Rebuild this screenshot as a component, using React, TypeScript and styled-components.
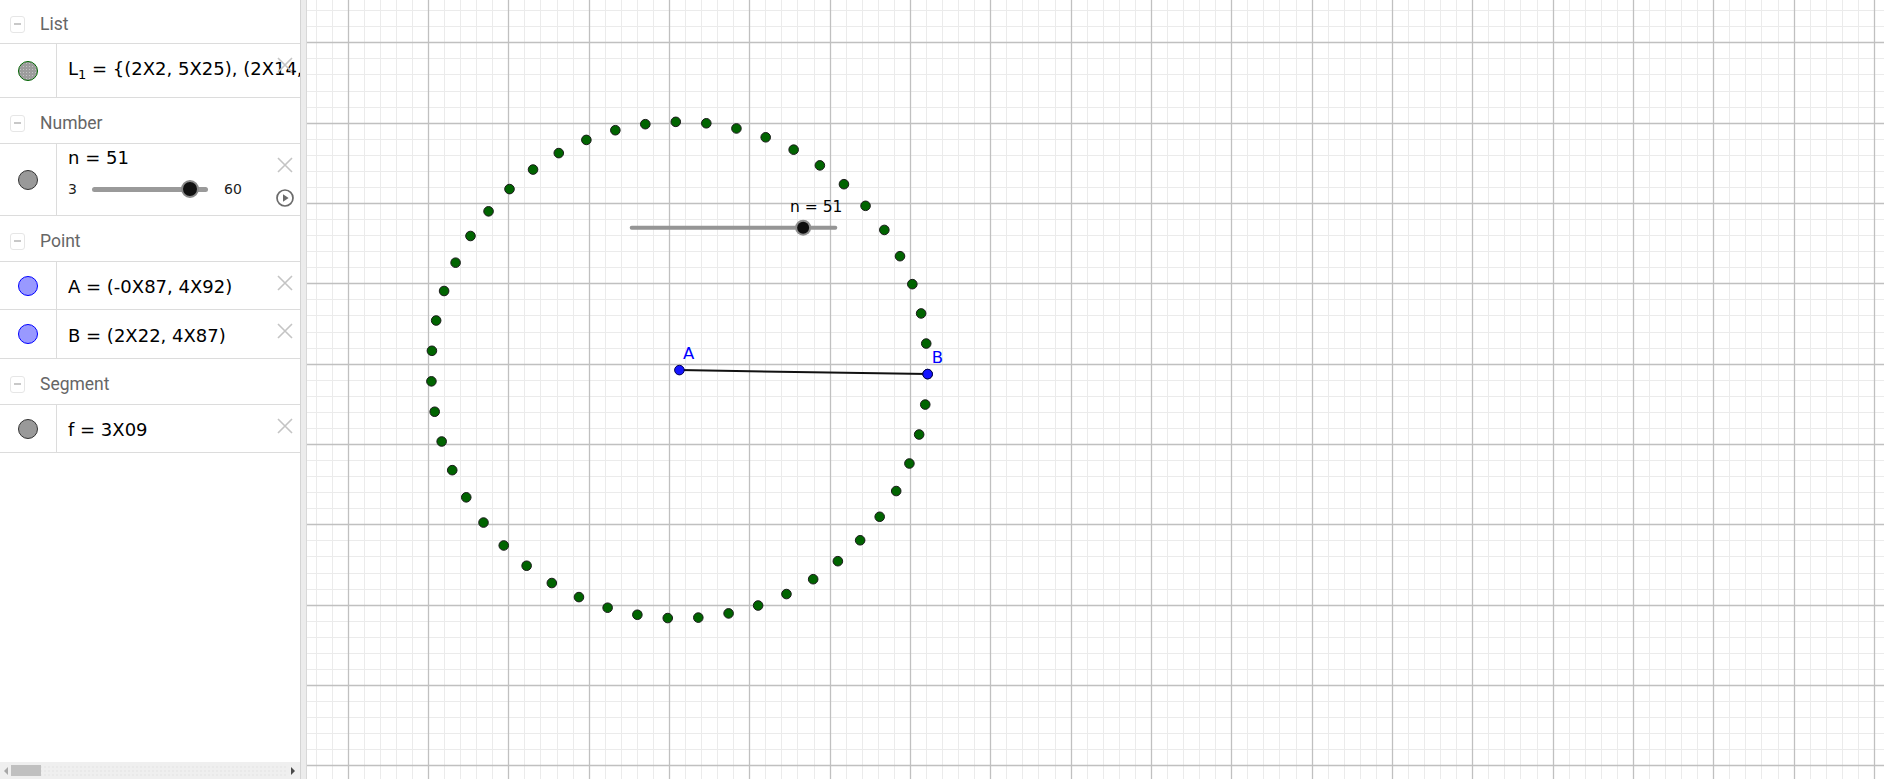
import React from "react";
import styled, { createGlobalStyle } from "styled-components";

const GlobalStyle = createGlobalStyle`
  html, body {
    margin: 0;
    padding: 0;
    background: #fff;
    overflow: hidden;
  }
  * {
    box-sizing: border-box;
  }
`;

const Layout = styled.div`
  display: flex;
  width: 1884px;
  height: 779px;
`;

const AlgebraPanel = styled.div`
  width: 301px;
  flex-shrink: 0;
  display: flex;
  flex-direction: column;
  border-right: 1px solid #d4d4d4;
  background: #fff;
`;

const ItemList = styled.div`
  flex: 1;
  overflow: hidden;
`;

const GroupHeader = styled.div<{ $h: number }>`
  height: ${({ $h }) => $h}px;
  display: flex;
  align-items: center;
  gap: 15px;
  padding: 5px 0 0 10px;
  border-bottom: 1px solid #dcdcdc;
  font-family: Roboto, "Noto Sans", sans-serif;
  font-size: 17.5px;
  color: #666;
`;

const CollapseBox = styled.span`
  width: 15px;
  height: 17px;
  border: 1px solid #e6e6e6;
  border-radius: 3px;
  display: flex;
  align-items: center;
  justify-content: center;

  &::before {
    content: "";
    width: 7px;
    height: 2px;
    background: #c8c8c8;
  }
`;

const ItemRow = styled.div<{ $h: number }>`
  position: relative;
  height: ${({ $h }) => $h}px;
  display: flex;
  border-bottom: 1px solid #dcdcdc;
`;

const MarkerCell = styled.div`
  width: 57px;
  flex-shrink: 0;
  border-right: 1px solid #dcdcdc;
  display: flex;
  align-items: center;
  justify-content: center;
`;

const Marker = styled.span<{ $fill: string; $stroke: string; $dotted?: boolean }>`
  width: 20px;
  height: 20px;
  border-radius: 50%;
  background-color: ${({ $fill }) => $fill};
  border: 1px solid ${({ $stroke }) => $stroke};
  ${({ $dotted }) =>
    $dotted &&
    `background-image: radial-gradient(circle, #c4c4c4 0.8px, transparent 1px);
     background-size: 3px 3px;`}
`;

const Content = styled.div<{ $column?: boolean }>`
  flex: 1;
  min-width: 0;
  padding-left: 11px;
  display: flex;
  flex-direction: ${({ $column }) => ($column ? "column" : "row")};
  justify-content: flex-start;
  align-items: ${({ $column }) => ($column ? "flex-start" : "center")};
  padding-top: ${({ $column }) => ($column ? "3px" : "0")};
  overflow: hidden;
  white-space: nowrap;
  font-family: "DejaVu Sans", "Liberation Sans", sans-serif;
  font-size: 18px;
  color: #000;
`;

const Formula = styled.span`
  line-height: 24px;
  padding-top: 3px;

  sub {
    font-size: 13px;
    vertical-align: -4px;
  }
`;

const NumberValue = styled.span`
  line-height: 22px;
`;

const SliderRow = styled.div`
  display: flex;
  align-items: center;
  height: 18px;
  margin-top: 11px;
  font-size: 14px;
  color: #222;
`;

const SliderBound = styled.span<{ $w: number }>`
  width: ${({ $w }) => $w}px;
`;

const SliderTrack = styled.div`
  position: relative;
  width: 116px;
  height: 5px;
  margin-right: 16px;
  border-radius: 3px;
  background: #9a9a9a;
`;

const SliderKnob = styled.span`
  position: absolute;
  top: 50%;
  width: 18px;
  height: 18px;
  margin: -9px 0 0 -9px;
  border-radius: 50%;
  background: #111;
  border: 2.5px solid #8a8a8a;
`;

const CloseButton = styled.button`
  position: absolute;
  top: 13px;
  right: 7px;
  width: 16px;
  height: 16px;
  padding: 0;
  border: 0;
  background: transparent;
  display: flex;
`;

const PlayButton = styled.button`
  position: absolute;
  top: 44px;
  right: 5px;
  width: 20px;
  height: 20px;
  padding: 0;
  border: 0;
  background: transparent;
  display: flex;
`;

const HScrollbar = styled.div`
  height: 17px;
  flex-shrink: 0;
  display: flex;
  align-items: center;
  padding: 0 5px 0 4px;
  gap: 3px;
  background-color: #efefef;
`;

const ScrollTrack = styled.div`
  flex: 1;
  height: 11px;
  display: flex;
  background-image: radial-gradient(circle, #e2e2e2 0.6px, transparent 0.8px);
  background-size: 4px 4px;
`;

const ScrollThumb = styled.div`
  width: 30px;
  height: 11px;
  background: #c0c0c0;
`;

const ScrollArrow = styled.span<{ $dir: "left" | "right"; $color: string }>`
  width: 0;
  height: 0;
  border-top: 4px solid transparent;
  border-bottom: 4px solid transparent;
  ${({ $dir, $color }) =>
    $dir === "left"
      ? `border-right: 4px solid ${$color};`
      : `border-left: 4px solid ${$color};`}
`;

const Divider = styled.div`
  width: 6px;
  flex-shrink: 0;
  background: #ececec;
  border-right: 1px solid #d8d8d8;
`;

const Graphics = styled.div`
  flex: 1;
  position: relative;
  overflow: hidden;
  background: #fff;
`;

const CloseIcon = () => (
  <svg width="16" height="16" viewBox="0 0 16 16">
    <path d="M1 1 L15 15 M15 1 L1 15" stroke="#c4c4c4" strokeWidth="1.6" fill="none" />
  </svg>
);

const PlayIcon = () => (
  <svg width="20" height="20" viewBox="0 0 20 20">
    <circle cx="10" cy="10" r="8" stroke="#6b6b6b" strokeWidth="1.7" fill="none" />
    <path d="M8 6.2 L13.6 10 L8 13.8 Z" fill="#6b6b6b" />
  </svg>
);

// graphics view coordinates
const W = 1577;
const H = 779;
const SCALE = 80.33;
const OX = 442.3;
const OY = 765.3;
const toX = (u: number) => OX + u * SCALE;
const toY = (v: number) => OY - v * SCALE;

const A = { x: -0.87, y: 4.92 };
const B = { x: 2.22, y: 4.87 };
const N = 51;

const GridLines = () => {
  const step = SCALE / 5;
  const minor: React.ReactNode[] = [];
  const major: React.ReactNode[] = [];
  const k0 = Math.ceil(-OX / step);
  const k1 = Math.floor((W - OX) / step);
  for (let k = k0; k <= k1; k++) {
    const x = Math.round(OX + k * step) + 0.5;
    const line = <line key={"v" + k} x1={x} y1={0} x2={x} y2={H} />;
    (k % 5 === 0 ? major : minor).push(line);
  }
  const j0 = Math.ceil((OY - H) / step);
  const j1 = Math.floor(OY / step);
  for (let j = j0; j <= j1; j++) {
    const y = Math.round(OY - j * step) + 0.5;
    const line = <line key={"h" + j} x1={0} y1={y} x2={W} y2={y} />;
    (j % 5 === 0 ? major : minor).push(line);
  }
  return (
    <>
      <g stroke="#ebebeb" strokeWidth="1">{minor}</g>
      <g stroke="#c0c0c0" strokeWidth="1.3">{major}</g>
    </>
  );
};

const CircleDots = () => {
  const r = Math.hypot(B.x - A.x, B.y - A.y);
  const base = Math.atan2(B.y - A.y, B.x - A.x);
  const dots = [];
  for (let k = 0; k < N; k++) {
    const t = base + (k * 2 * Math.PI) / N;
    dots.push(
      <circle
        key={k}
        cx={toX(A.x + r * Math.cos(t))}
        cy={toY(A.y + r * Math.sin(t))}
        r={4.8}
        fill="#006400"
        stroke="#1a1a1a"
        strokeWidth="1"
      />
    );
  }
  return <g>{dots}</g>;
};

const CanvasSlider = ({ value, min, max }: { value: number; min: number; max: number }) => {
  const x1 = 324.7;
  const x2 = 528.3;
  const y = 227.7;
  const kx = x1 + ((value - min) / (max - min)) * (x2 - x1);
  return (
    <g>
      <line x1={x1} y1={y} x2={x2} y2={y} stroke="#959595" strokeWidth="4" strokeLinecap="round" />
      <circle cx={kx} cy={y} r={8} fill="#8f8f8f" />
      <circle cx={kx} cy={y} r={6} fill="#0d0d0d" />
      <text x={483} y={212} fontFamily="DejaVu Sans, sans-serif" fontSize="15.5" fill="#000">
        n = 51
      </text>
    </g>
  );
};

const GraphicsView = () => (
  <svg width={W} height={H} style={{ display: "block" }}>
    <GridLines />
    <CircleDots />
    <CanvasSlider value={51} min={3} max={60} />
    <line x1={toX(A.x)} y1={toY(A.y)} x2={toX(B.x)} y2={toY(B.y)} stroke="#111" strokeWidth="2" />
    <circle cx={toX(A.x)} cy={toY(A.y)} r={4.8} fill="#1515ff" stroke="#000055" strokeWidth="1" />
    <circle cx={toX(B.x)} cy={toY(B.y)} r={4.8} fill="#1515ff" stroke="#000055" strokeWidth="1" />
    <g fontFamily="DejaVu Sans, sans-serif" fontSize="16.5" fill="#0000ff">
      <text x={376} y={359}>A</text>
      <text x={624.7} y={363}>B</text>
    </g>
  </svg>
);

const Group = ({ title, h }: { title: string; h: number }) => (
  <GroupHeader $h={h}>
    <CollapseBox />
    <span>{title}</span>
  </GroupHeader>
);

const Close = () => (
  <CloseButton aria-label="delete">
    <CloseIcon />
  </CloseButton>
);

export default function App() {
  const sliderFrac = (51 - 3) / (60 - 3);
  return (
    <>
      <GlobalStyle />
      <Layout>
        <AlgebraPanel>
          <ItemList>
            <Group title="List" h={44} />
            <ItemRow $h={54}>
              <MarkerCell>
                <Marker $fill="#9c9c9c" $stroke="#006400" $dotted />
              </MarkerCell>
              <Content>
                <Formula>
                  L<sub>1</sub> = {"{"}(2X2, 5X25), (2X14, 5X6), (1X96, 5X95)
                </Formula>
              </Content>
              <Close />
            </ItemRow>

            <Group title="Number" h={46} />
            <ItemRow $h={72}>
              <MarkerCell>
                <Marker $fill="#999" $stroke="#333" />
              </MarkerCell>
              <Content $column>
                <NumberValue>n = 51</NumberValue>
                <SliderRow>
                  <SliderBound $w={24}>3</SliderBound>
                  <SliderTrack>
                    <SliderKnob style={{ left: `${sliderFrac * 100}%` }} />
                  </SliderTrack>
                  <span>60</span>
                </SliderRow>
              </Content>
              <Close />
              <PlayButton aria-label="play">
                <PlayIcon />
              </PlayButton>
            </ItemRow>

            <Group title="Point" h={46} />
            <ItemRow $h={48}>
              <MarkerCell>
                <Marker $fill="#9999ff" $stroke="#0000ff" />
              </MarkerCell>
              <Content>
                <Formula>A = (-0X87, 4X92)</Formula>
              </Content>
              <Close />
            </ItemRow>
            <ItemRow $h={49}>
              <MarkerCell>
                <Marker $fill="#9999ff" $stroke="#0000ff" />
              </MarkerCell>
              <Content>
                <Formula>B = (2X22, 4X87)</Formula>
              </Content>
              <Close />
            </ItemRow>

            <Group title="Segment" h={46} />
            <ItemRow $h={48}>
              <MarkerCell>
                <Marker $fill="#999" $stroke="#333" />
              </MarkerCell>
              <Content>
                <Formula>f = 3X09</Formula>
              </Content>
              <Close />
            </ItemRow>
          </ItemList>
          <HScrollbar>
            <ScrollArrow $dir="left" $color="#a8a8a8" />
            <ScrollTrack>
              <ScrollThumb />
            </ScrollTrack>
            <ScrollArrow $dir="right" $color="#4a4a4a" />
          </HScrollbar>
        </AlgebraPanel>
        <Divider />
        <Graphics>
          <GraphicsView />
        </Graphics>
      </Layout>
    </>
  );
}
